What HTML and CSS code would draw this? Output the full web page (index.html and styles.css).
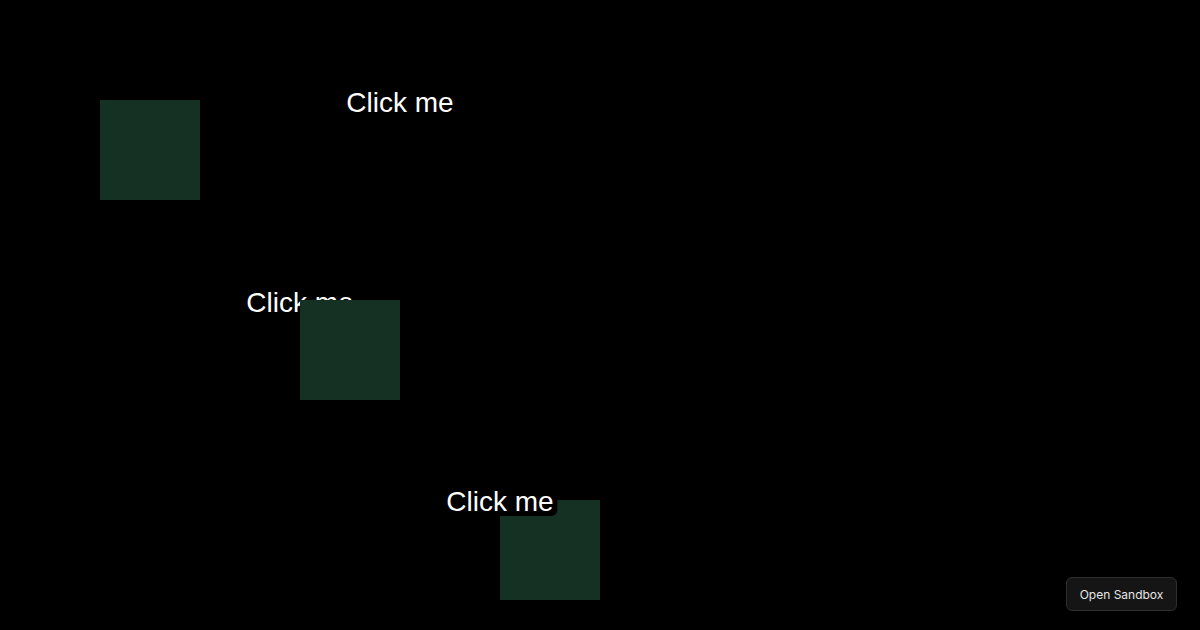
FILE: index.html
```html
<!DOCTYPE html>
<html>
<head>
<meta charset="utf-8">
<link rel="stylesheet" href="styles.css">
</head>
<body>
<div class="canvas">
  <div class="square sq1"></div>
  <div class="label l1">Click me</div>
  <div class="label l2">Click me</div>
  <div class="square sq2"></div>
  <div class="square sq3"></div>
  <div class="label l3">Click me</div>
</div>
<button class="sandbox">Open Sandbox</button>
</body>
</html>
```
FILE: styles.css
```css
html, body {
  margin: 0;
  padding: 0;
  background: #000;
  width: 1200px;
  height: 630px;
  overflow: hidden;
}
.canvas {
  position: relative;
  width: 1200px;
  height: 630px;
}
.square {
  position: absolute;
  width: 100px;
  height: 100px;
  background: #153124;
}
.sq1 { left: 100px; top: 100px; }
.sq2 { left: 300px; top: 300px; }
.sq3 { left: 500px; top: 500px; }
.label {
  position: absolute;
  transform: translate(-50%, -50%);
  font-family: "Liberation Sans", Arial, sans-serif;
  font-size: 28px;
  line-height: 28px;
  color: #fff;
  background: #000;
  padding: 0 4px;
  border-radius: 6px;
  white-space: nowrap;
}
.l1 { left: 400px; top: 103px; }
.l2 { left: 300px; top: 303px; }
.l3 { left: 500px; top: 502px; }
.sandbox {
  position: absolute;
  right: 23px;
  bottom: 19px;
  width: 111px;
  height: 34px;
  background: #151515;
  color: #e6e6e6;
  border: 1px solid #2e2e2e;
  border-radius: 6px;
  font-family: Inter, "Noto Sans", sans-serif;
  font-size: 12px;
  padding: 0;
  cursor: pointer;
}
```
